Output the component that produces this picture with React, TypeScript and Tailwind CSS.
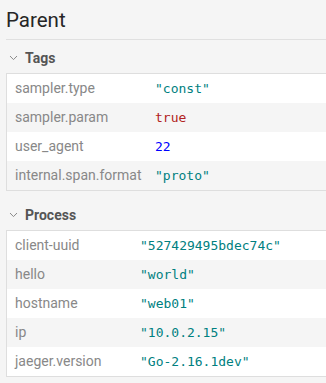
import React from "react";

type V = { k: string; v: string; t: "s" | "b" | "n" };

const tags: V[] = [
  { k: "sampler.type", v: '"const"', t: "s" },
  { k: "sampler.param", v: "true", t: "b" },
  { k: "user_agent", v: "22", t: "n" },
  { k: "internal.span.format", v: '"proto"', t: "s" },
];

const proc: V[] = [
  { k: "client-uuid", v: '"527429495bdec74c"', t: "s" },
  { k: "hello", v: '"world"', t: "s" },
  { k: "hostname", v: '"web01"', t: "s" },
  { k: "ip", v: '"10.0.2.15"', t: "s" },
  { k: "jaeger.version", v: '"Go-2.16.1dev"', t: "s" },
];

function Chevron() {
  return (
    <svg width="9" height="6" viewBox="0 0 9 6" className="mr-[7px] ml-[3px]">
      <polyline points="1,1 4.5,4.6 8,1" fill="none" stroke="#8a8a8a" strokeWidth="1" />
    </svg>
  );
}

function Table({ rows, keyW }: { rows: V[]; keyW: string }) {
  return (
    <div className="border-y border-l border-[#dedede]">
      {rows.map((r, i) => (
        <div
          key={r.k}
          className={`flex h-[29px] items-baseline ${i % 2 === 0 ? "bg-white" : "bg-[#f5f5f5]"}`}
        >
          <div className={`${keyW} shrink-0 px-2 py-1 text-[14px] leading-[21px] text-[#888888] whitespace-pre`}>
            {r.k}
          </div>
          <div
            className={`px-2 py-1 text-[13px] leading-[21px] font-['DejaVu_Sans_Mono',monospace] ${
              r.t === "s" ? "text-[#008080]" : r.t === "b" ? "text-[#b22222]" : "text-[#0000ff]"
            }`}
          >
            {r.v}
          </div>
        </div>
      ))}
    </div>
  );
}

function Header({ title, mt }: { title: string; mt: string }) {
  return (
    <div className={`${mt} mb-[5px] flex h-[20px] items-center`}>
      <Chevron />
      <span className="text-[14px] leading-[20px] font-bold text-[#555555]">{title}</span>
    </div>
  );
}

export default function App() {
  return (
    <div className="h-[383px] w-[326px] overflow-hidden bg-[#f5f5f5] pl-[6px] font-['Roboto',sans-serif]">
      <div className="mt-[6px] border-b border-[#e0e0e0] pb-[5px] text-[20.5px] leading-[28px] text-[#262626]">
        Parent
      </div>
      <Header title="Tags" mt="mt-[8px]" />
      <Table rows={tags} keyW="w-[140px]" />
      <Header title="Process" mt="mt-[14px]" />
      <Table rows={proc} keyW="w-[125px]" />
    </div>
  );
}
